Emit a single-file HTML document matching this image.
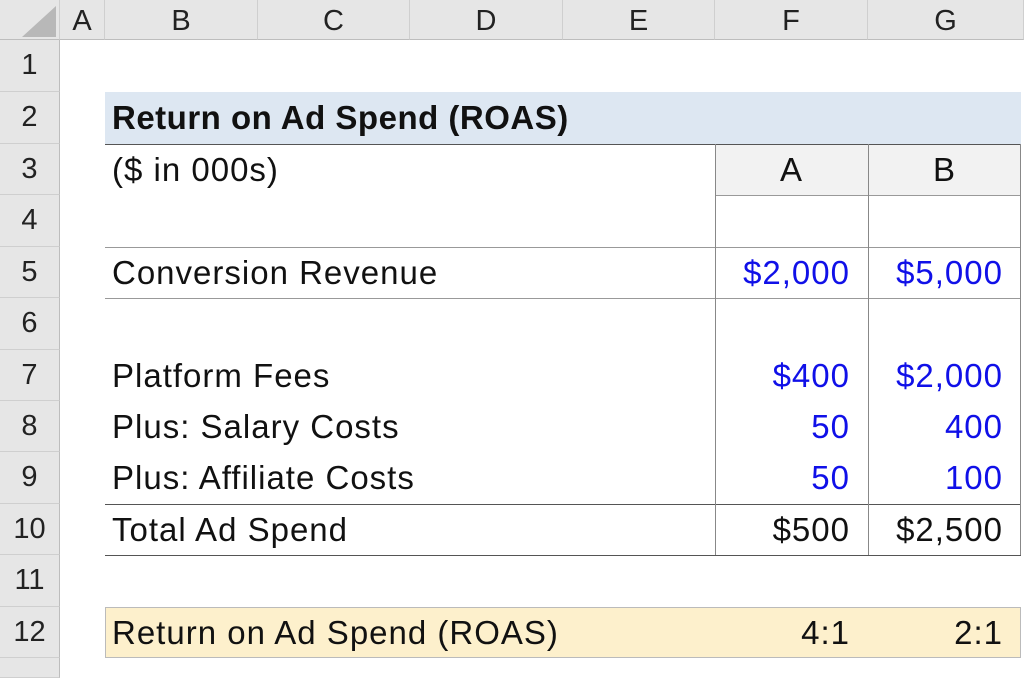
<!DOCTYPE html>
<html><head><style>
body{margin:0;width:1024px;height:671px;background:#fff;position:relative;overflow:hidden;font-family:"Liberation Sans",sans-serif}
.a{position:absolute;box-sizing:border-box}
.ch{top:0;height:40px;background:#e6e6e6;border-right:1px solid #cfcfcf;border-bottom:1px solid #bdbdbd;text-align:center;line-height:42px;font-size:29px;color:#222}
.rh{left:0;width:60px;background:#e6e6e6;border-bottom:1px solid #cfcfcf;border-right:1px solid #bdbdbd;text-align:center;font-size:29px;color:#222;line-height:51px}
.t{font-size:33px;letter-spacing:1px;line-height:51px;color:#111;white-space:nowrap}
.r{text-align:right;padding-right:18px}
.b{color:#1010e8}
.hl{height:1px;background:#555}
.vl{width:1px;background:#888}
</style></head><body>
<div class="a ch" style="left:0;width:60px"><svg width="60" height="40" style="position:absolute;left:0;top:0"><polygon points="56,6 56,37 22,37" fill="#b8b8b8"/></svg></div>
<div class="a ch" style="left:60px;width:45px">A</div>
<div class="a ch" style="left:105px;width:153px">B</div>
<div class="a ch" style="left:258px;width:152px">C</div>
<div class="a ch" style="left:410px;width:153px">D</div>
<div class="a ch" style="left:563px;width:152px">E</div>
<div class="a ch" style="left:715px;width:153px">F</div>
<div class="a ch" style="left:868px;width:156px">G</div>

<div class="a rh" style="top:40px;height:52px">1</div>
<div class="a rh" style="top:92px;height:52px">2</div>
<div class="a rh" style="top:144px;height:51px">3</div>
<div class="a rh" style="top:195px;height:52px">4</div>
<div class="a rh" style="top:247px;height:51px">5</div>
<div class="a rh" style="top:298px;height:52px">6</div>
<div class="a rh" style="top:350px;height:51px">7</div>
<div class="a rh" style="top:401px;height:51px">8</div>
<div class="a rh" style="top:452px;height:52px">9</div>
<div class="a rh" style="top:504px;height:51px">10</div>
<div class="a rh" style="top:555px;height:52px">11</div>
<div class="a rh" style="top:607px;height:51px">12</div>
<div class="a rh" style="top:658px;height:20px"></div>

<div class="a" style="left:105px;top:92px;width:916px;height:52px;background:#dde7f2"></div>
<div class="a t" style="left:112px;top:92px;font-weight:bold;letter-spacing:0.5px">Return on Ad Spend (ROAS)</div>
<div class="a hl" style="left:105px;top:144px;width:916px"></div>
<div class="a" style="left:715px;top:145px;width:306px;height:50px;background:#f2f2f2"></div>
<div class="a t" style="left:112px;top:144px">($ in 000s)</div>
<div class="a t" style="left:715px;top:144px;width:153px;text-align:center">A</div>
<div class="a t" style="left:868px;top:144px;width:153px;text-align:center">B</div>
<div class="a hl" style="left:715px;top:195px;width:306px;background:#999"></div>
<div class="a hl" style="left:105px;top:247px;width:916px;background:#999"></div>
<div class="a t" style="left:112px;top:247px">Conversion Revenue</div>
<div class="a t r b" style="left:715px;top:247px;width:153px">$2,000</div>
<div class="a t r b" style="left:868px;top:247px;width:153px">$5,000</div>
<div class="a hl" style="left:105px;top:298px;width:916px;background:#999"></div>
<div class="a t" style="left:112px;top:350px">Platform Fees</div>
<div class="a t r b" style="left:715px;top:350px;width:153px">$400</div>
<div class="a t r b" style="left:868px;top:350px;width:153px">$2,000</div>
<div class="a t" style="left:112px;top:401px">Plus: Salary Costs</div>
<div class="a t r b" style="left:715px;top:401px;width:153px">50</div>
<div class="a t r b" style="left:868px;top:401px;width:153px">400</div>
<div class="a t" style="left:112px;top:452px">Plus: Affiliate Costs</div>
<div class="a t r b" style="left:715px;top:452px;width:153px">50</div>
<div class="a t r b" style="left:868px;top:452px;width:153px">100</div>
<div class="a hl" style="left:105px;top:504px;width:916px"></div>
<div class="a t" style="left:112px;top:504px">Total Ad Spend</div>
<div class="a t r" style="left:715px;top:504px;width:153px">$500</div>
<div class="a t r" style="left:868px;top:504px;width:153px">$2,500</div>
<div class="a hl" style="left:105px;top:555px;width:916px"></div>

<div class="a vl" style="left:715px;top:144px;height:411px"></div>
<div class="a vl" style="left:868px;top:144px;height:411px"></div>
<div class="a vl" style="left:1020px;top:144px;height:411px"></div>

<div class="a" style="left:105px;top:607px;width:916px;height:51px;background:#fdf0cc;border:1px solid #bbb"></div>
<div class="a t" style="left:112px;top:607px">Return on Ad Spend (ROAS)</div>
<div class="a t r" style="left:715px;top:607px;width:153px">4:1</div>
<div class="a t r" style="left:868px;top:607px;width:153px">2:1</div>
</body></html>
